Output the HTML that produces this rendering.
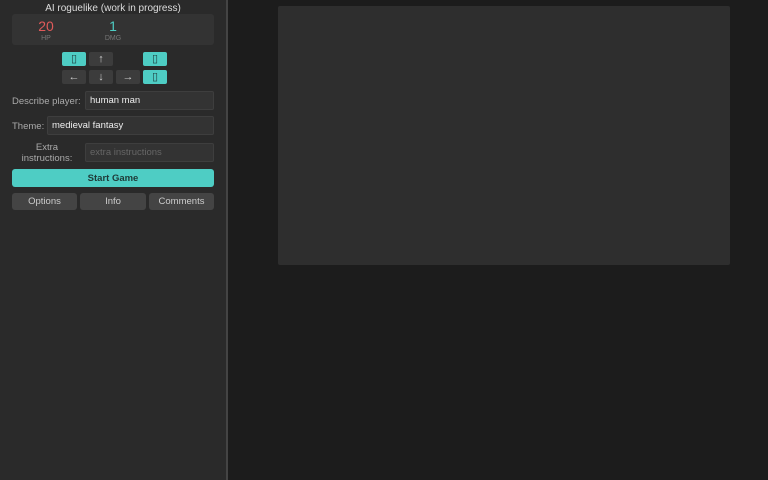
<!DOCTYPE html><html><head><style>
body{margin:0;width:768px;height:480px;background:#1c1c1c;font-family:"Liberation Sans",sans-serif;overflow:hidden;position:relative}
.side{position:absolute;left:0;top:0;width:226px;height:480px;background:#2a2a2a;border-right:2px solid #444}
.a{position:absolute}
.t{left:0;width:226px;text-align:center;top:3px;font-size:10px;color:#ddd}
.stats{left:12px;top:14px;width:202px;height:31px;background:#333;border-radius:3px}
.btn{position:absolute;width:24px;height:14px;border-radius:2px;background:#3c3c3c;color:#ccc;font-size:11px;text-align:center;line-height:15px}
.c{background:#4ecdc4;color:#244}
.lab{font-size:9.5px;color:#aaa;position:absolute}
.in{position:absolute;height:19px;background:#333;border:1px solid #3e3e3e;border-radius:2px;box-sizing:border-box;font-size:9.5px;color:#eee;padding-left:4px;line-height:18px}
.gb{position:absolute;top:193px;height:17px;background:#444;border-radius:3px;color:#ccc;font-size:9.5px;text-align:center;line-height:18px}
</style></head><body>
<div class="side">
<div class="a t">AI roguelike (work in progress)</div>
<div class="a stats"></div>
<div class="a" style="left:30px;top:18px;width:32px;text-align:center;color:#e05a5a;font-size:14px">20</div>
<div class="a" style="left:30px;top:35px;width:32px;text-align:center;color:#777;font-size:7px">HP</div>
<div class="a" style="left:97px;top:18px;width:32px;text-align:center;color:#4ecdc4;font-size:14px">1</div>
<div class="a" style="left:97px;top:35px;width:32px;text-align:center;color:#777;font-size:7px">DMG</div>
<div class="btn c" style="left:62px;top:52px">▯</div>
<div class="btn" style="left:89px;top:52px">↑</div>
<div class="btn c" style="left:143px;top:52px">▯</div>
<div class="btn" style="left:62px;top:70px">←</div>
<div class="btn" style="left:89px;top:70px">↓</div>
<div class="btn" style="left:116px;top:70px">→</div>
<div class="btn c" style="left:143px;top:70px">▯</div>
<div class="lab" style="left:12px;top:96px">Describe player:</div>
<div class="in" style="left:85px;top:91px;width:129px">human man</div>
<div class="lab" style="left:12px;top:121px">Theme:</div>
<div class="in" style="left:47px;top:116px;width:167px">medieval fantasy</div>
<div class="lab" style="left:12px;top:142px;width:70px;text-align:center;line-height:11px">Extra<br>instructions:</div>
<div class="in" style="left:85px;top:143px;width:129px;color:#666">extra instructions</div>
<div class="a" style="left:12px;top:169px;width:202px;height:18px;background:#4ecdc4;border-radius:3px;text-align:center;line-height:19px;font-size:9.5px;font-weight:bold;color:#1e3a38">Start Game</div>
<div class="gb" style="left:12px;width:65px">Options</div>
<div class="gb" style="left:80px;width:66px">Info</div>
<div class="gb" style="left:149px;width:65px">Comments</div>
</div>
<div class="a" style="left:278px;top:6px;width:452px;height:259px;background:#2e2e2e;border-radius:2px"></div>
</body></html>
